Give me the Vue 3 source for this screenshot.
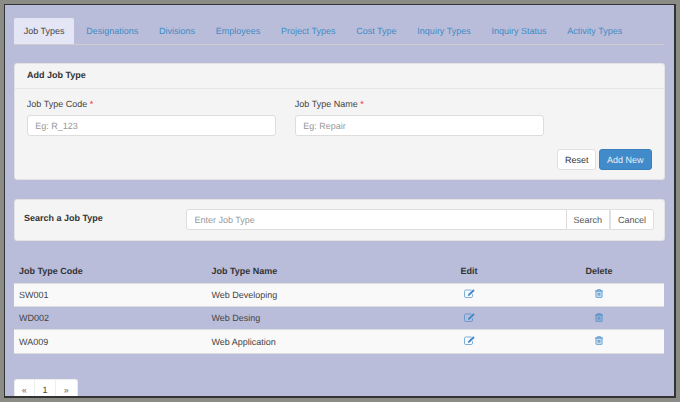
<script setup>
const tabs = ['Job Types','Designations','Divisions','Employees','Project Types','Cost Type','Inquiry Types','Inquiry Status','Activity Types']
const rows = [
  { code:'SW001', name:'Web Developing' },
  { code:'WD002', name:'Web Desing' },
  { code:'WA009', name:'Web Application' }
]
</script>

<template>
  <div class="frame">
    <div class="page">
      <ul class="tabs">
        <li v-for="(t,i) in tabs" :key="t" class="tab" :class="{active:i===0}">{{ t }}</li>
      </ul>

      <section class="panel add">
        <h3 class="panel-head">Add Job Type</h3>
        <div class="panel-body">
          <div class="fields">
            <div class="field">
              <label>Job Type Code <span class="req">*</span></label>
              <input class="input" placeholder="Eg: R_123" />
            </div>
            <div class="field">
              <label>Job Type Name <span class="req">*</span></label>
              <input class="input" placeholder="Eg: Repair" />
            </div>
          </div>
          <div class="actions">
            <button class="btn reset">Reset</button>
            <button class="btn primary">Add New</button>
          </div>
        </div>
      </section>

      <section class="panel search">
        <strong class="search-title">Search a Job Type</strong>
        <div class="group">
          <input class="input group-input" placeholder="Enter Job Type" />
          <button class="btn group-btn">Search</button>
          <button class="btn group-btn last">Cancel</button>
        </div>
      </section>

      <table class="table">
        <thead>
          <tr>
            <th class="c1">Job Type Code</th>
            <th class="c2">Job Type Name</th>
            <th class="c3">Edit</th>
            <th class="c4">Delete</th>
          </tr>
        </thead>
        <tbody>
          <tr v-for="r in rows" :key="r.code">
            <td>{{ r.code }}</td>
            <td>{{ r.name }}</td>
            <td class="center">
              <svg class="icon" width="11" height="9" viewBox="0 0 11 9">
                <path d="M7.500 1H1.800C1 1 .5 1.500 .5 2.300V7.200C.5 8 1 8.500 1.800 8.500H7.200C8 8.500 8.500 8 8.500 7.200V5.200" fill="none" stroke="#428bca" stroke-width=".8" stroke-opacity=".85"/>
                <path d="M9.300 .3L10.700 1.700 5.700 6.400 3.900 6.900 4.300 5z" fill="#428bca"/>
              </svg>
            </td>
            <td class="center">
              <svg class="icon" width="8" height="9" viewBox="0 0 8 9">
                <path d="M0 1.800H8M2.600 1.800V.5H5.400V1.800" fill="none" stroke="#428bca" stroke-width=".8" stroke-opacity=".85"/>
                <path d="M.9 2V7.900C.9 8.300 1.200 8.600 1.600 8.600H6.400C6.800 8.600 7.100 8.300 7.100 7.900V2z" fill="#428bca" fill-opacity=".3" stroke="#428bca" stroke-width=".8" stroke-opacity=".85"/>
                <path d="M2.700 4H5.300V6.600H2.700z" fill="#428bca" fill-opacity=".6"/>
              </svg>
            </td>
          </tr>
        </tbody>
      </table>

      <div class="pager">
        <span class="pg">«</span>
        <span class="pg num">1</span>
        <span class="pg">»</span>
      </div>
    </div>
  </div>
</template>

<style scoped>
.frame {
  width: 680px;
  height: 402px;
  box-sizing: border-box;
  border: 4px solid #8a8c85;
  overflow: hidden;
  font-family: "Liberation Sans", Arial, sans-serif;
  font-size: 9px;
  text-rendering: geometricPrecision;
  color: #333;
}
.page {
  box-sizing: border-box;
  height: 394px;
  border: 1px solid #333;
  border-right-width: 2px;
  border-bottom-width: 2px;
  background: #babdda;
  padding: 13.300px 10px 0 9px;
  overflow: hidden;
}
.tabs {
  list-style: none;
  margin: 0;
  padding: 0;
  display: flex;
  height: 26.500px;
  border-bottom: 1px solid #ccc;
  width: 650px;
  box-sizing: border-box;
}
.tab {
  padding: 0 10.400px;
  line-height: 26px;
  color: #3d8cc6;
  height: 25.500px;
  white-space: nowrap;
}
.active {
  background: #e4e5f5;
  color: #444;
  padding: 0 9.700px;
  border-radius: 2px 2px 0 0;
  margin-right: 1.500px;
}
.panel {
  background: #f4f4f4;
  border: 1px solid #e3e3e3;
  border-radius: 3px;
  width: 650.500px;
  box-sizing: border-box;
}
.add {
  margin-top: 18.500px;
  height: 117px;
}
.panel-head {
  margin: 0;
  height: 23.500px;
  line-height: 22px;
  padding-left: 12px;
  font-size: 9px;
  font-weight: 700;
  color: #333;
  border-bottom: 1px solid #e4e4e4;
}
.panel-body {
  padding: 9px 12px 0 11.800px;
}
.fields {
  display: flex;
  gap: 18.800px;
}
.field {
  display: flex;
  flex-direction: column;
  width: 249.200px;
}
label {
  line-height: 13px;
  margin-bottom: 4.700px;
  color: #444;
}
.req {
  color: #f22;
}
.input {
  box-sizing: border-box;
  height: 21px;
  border: 1px solid #ddd;
  border-radius: 3px;
  background: #fff;
  padding: 0 7.500px;
  font: 9px "Liberation Sans", Arial, sans-serif;
  text-rendering: geometricPrecision;
  color: #555;
  outline: none;
}
.input::placeholder {
  color: #999;
}
.actions {
  display: flex;
  justify-content: flex-end;
  gap: 3px;
  margin-top: 13px;
}
.btn {
  height: 21px;
  box-sizing: border-box;
  border: 1px solid #e0e0e0;
  border-radius: 3px;
  background: #fff;
  color: #333;
  padding: 0 7px;
  font: 9px "Liberation Sans", Arial, sans-serif;
  text-rendering: geometricPrecision;
}
.reset {
  width: 39px;
  padding: 0;
}
.primary {
  background: #428bca;
  border-color: #3b80bd;
  color: #e8eef6;
  width: 52.300px;
  padding: 0;
}
.search {
  margin-top: 18.700px;
  height: 42px;
  display: flex;
  align-items: flex-start;
  padding: 9.300px 9.500px 0 9px;
}
.search-title {
  width: 162px;
  line-height: 18px;
  color: #333;
}
.group {
  display: flex;
  flex: 1;
}
.group-input {
  flex: 1;
  min-width: 0;
  border-radius: 3px 0 0 3px;
}
.group-btn {
  border-radius: 0;
  border-left-width: 0;
  color: #555;
  width: 43.500px;
  padding: 0;
}
.last {
  border-radius: 0 3px 3px 0;
  border-left-width: 1px;
  width: 44px;
}
.table {
  margin-top: 18.300px;
  width: 650px;
  border-collapse: collapse;
  table-layout: fixed;
}
th {
  height: 24px;
  text-align: left;
  padding: 0 5px;
  font-weight: 700;
  color: #333;
  border-bottom: 1px solid #ddd;
  box-sizing: border-box;
}
td {
  height: 23.300px;
  padding: 0 5px;
  color: #444;
  border-bottom: 1px solid #ddd;
  box-sizing: border-box;
}
tbody tr:nth-child(odd) {
  background: #f9f9f9;
}
.c1 { width: 192.500px; }
.c2 { width: 197.500px; }
.c3 { width: 130px; text-align: center; }
.c4 { text-align: center; }
.center {
  text-align: center;
  line-height: 0;
  padding-bottom: 2px;
}
.icon {
  display: inline-block;
}
.pager {
  display: inline-flex;
  margin-top: 25px;
  margin-left: -0.500px;
  background: #fff;
  border: 1px solid #eee;
  border-bottom: 0;
  border-radius: 3px 3px 0 0;
  height: 22px;
}
.pg {
  width: 20.700px;
  box-sizing: border-box;
  line-height: 20px;
  text-align: center;
  color: #666;
  border-right: 1px solid #eee;
}
.pg:last-child { border-right: 0; }
.num { color: #444; }
</style>
